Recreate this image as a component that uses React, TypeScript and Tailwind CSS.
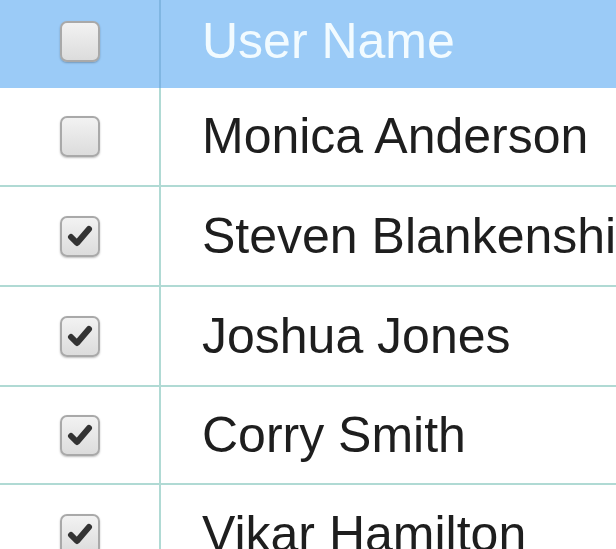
const users = [
  { name: "Monica Anderson", checked: false, h: "h-[99px]" },
  { name: "Steven Blankenship", checked: true, h: "h-[100px]" },
  { name: "Joshua Jones", checked: true, h: "h-[100px]" },
  { name: "Corry Smith", checked: true, h: "h-[98px]" },
  { name: "Vikar Hamilton", checked: true, h: "h-[100px]" },
];

const Box = ({ checked }: { checked: boolean }) => (
  <div className="w-[40px] h-[41px] rounded-[7px] border-2 border-[#a9a9a9] bg-gradient-to-b from-[#f2f2f2] to-[#dcdcdc] shadow-[0_1px_2px_rgba(0,0,0,0.25)] flex items-center justify-center">
    {checked && (
      <svg width="26" height="24" viewBox="0 0 26 24">
        <path d="M4 13 L10 19 L22 5" fill="none" stroke="#333" strokeWidth="6" strokeLinecap="round" strokeLinejoin="round" />
      </svg>
    )}
  </div>
);

const App = () => {
  return (
    <div className="w-[616px] h-[549px] overflow-hidden bg-white [font-family:'Liberation_Sans',Arial,sans-serif]">
      <div className="flex h-[88px] bg-[#9bcbf7]">
        <div className="w-[161px] shrink-0 border-r-2 border-[#80b6e2] flex items-center justify-center pb-[5px]">
          <Box checked={false} />
        </div>
        <div className="flex items-center pl-[41px] pb-[5px] text-[50px] text-[#f2fbff] whitespace-nowrap">User Name</div>
      </div>
      {users.map((u, i) => (
        <div key={i} className={`flex border-b-2 border-[#b0dad4] ${u.h}`}>
          <div className="w-[161px] shrink-0 border-r-2 border-[#b0dad4] flex items-center justify-center">
            <Box checked={u.checked} />
          </div>
          <div className="flex items-center pl-[41px] text-[50px] text-[#1e1e1e] whitespace-nowrap">{u.name}</div>
        </div>
      ))}
    </div>
  );
};

export default App;
